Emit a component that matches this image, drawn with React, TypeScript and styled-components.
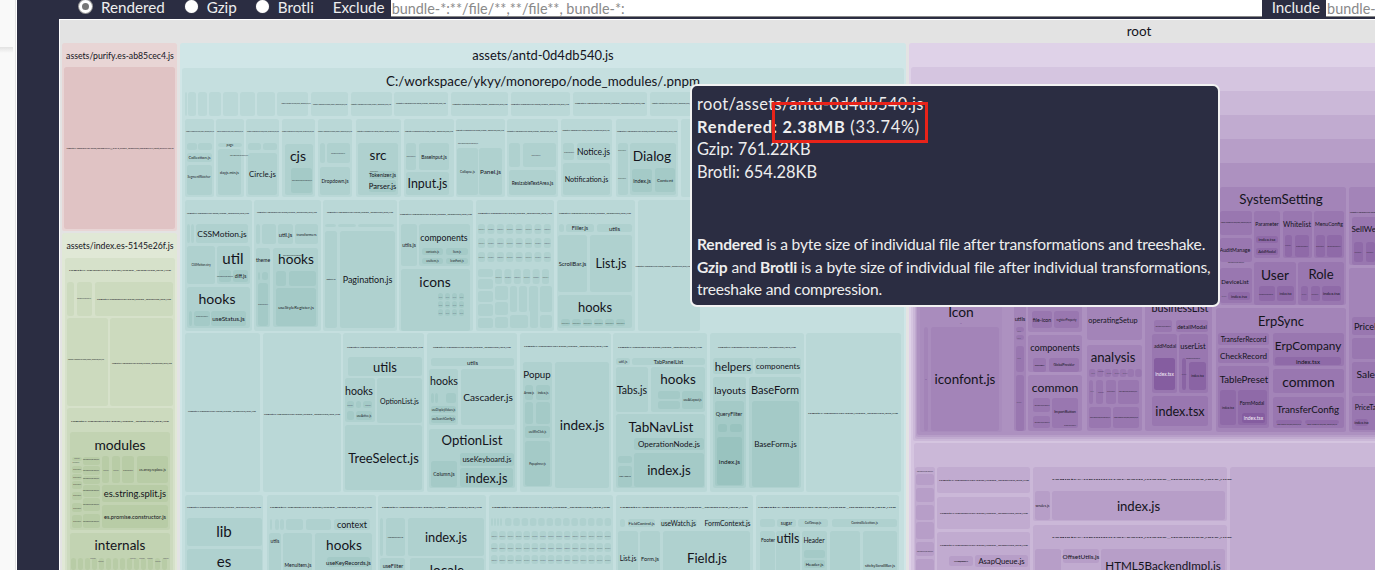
import styled, { createGlobalStyle } from "styled-components";

const FONT = `Lato, "Open Sans", sans-serif`;
const LABEL_SCALE = 1.08;

const GlobalStyle = createGlobalStyle`
  html, body {
    margin: 0;
    height: 100%;
    overflow: hidden;
    background: #2b2d42;
    font-family: ${FONT};
  }
`;

const Page = styled.div`
  position: relative;
  display: flex;
  width: 1375px;
  height: 570px;
  overflow: hidden;
`;

const Sidebar = styled.div`
  flex: 0 0 15px;
  background: #f9f9f9;
  border-right: 1px solid #e2e2e2;
  box-shadow: 1px 0 0 #fff;
  margin-right: 1px;
`;

const SideRule = styled.div`
  width: 13px;
  height: 6px;
  margin-top: 47px;
  background: linear-gradient(#e2e2e2, #f9f9f9);
`;

const Main = styled.main`
  flex: 1;
  min-width: 0;
  display: flex;
  flex-direction: column;
  background: #2b2d42;
`;

const Toolbar = styled.div`
  height: 19px;
  padding-left: 62px;
  display: flex;
  align-items: flex-start;
  color: #eee;
  font-size: 15.2px;
  line-height: 15px;
  white-space: nowrap;
`;

const Radio = styled.input.attrs({ type: "radio" })<{ $gap: number }>`
  appearance: none;
  flex: none;
  width: 13px;
  height: 13px;
  margin: 0 9px 0 ${(p) => p.$gap}px;
  border-radius: 50%;
  background: #fff;
  box-shadow: 0 0 1px #aaa;
  &:checked {
    background: #777;
    border: 3px solid #fff;
    box-sizing: border-box;
    box-shadow: 0 0 0 1px #999;
  }
`;

const Caption = styled.label<{ $gap?: number }>`
  margin-left: ${(p) => p.$gap ?? 0}px;
`;

const Filter = styled.input<{ $width: number }>`
  flex: none;
  box-sizing: border-box;
  width: ${(p) => p.$width}px;
  height: 17px;
  margin: 0 0 0 6px;
  padding: 0 1px;
  border: 0;
  border-bottom: 1px solid #888;
  border-radius: 0;
  background: #fff;
  font: 14.4px/15px ${FONT};
  &::placeholder {
    color: #8a8a8a;
  }
`;

const Chart = styled.div`
  margin-left: 42px;
  padding: 1px 0 0 1px;
  background: #fff;
  flex: 1;
  min-height: 0;
`;

const Map = styled.svg`
  display: block;
  background: #e3e3e3;
`;

const Cell = styled.rect`
  rx: 2.5px;
`;

const Label = styled.text<{ $light?: boolean }>`
  font-family: ${FONT};
  fill: ${(p) => (p.$light ? "#f4eef8" : "#14141c")};
  text-anchor: middle;
  dominant-baseline: central;
`;

const Tooltip = styled.div`
  position: absolute;
  left: 690px;
  top: 84px;
  box-sizing: border-box;
  width: 530px;
  height: 223px;
  padding: 7px 3px 0 5px;
  background: #2b2d42;
  border: 2px solid #f2f2f2;
  border-radius: 7px;
  color: #eee;
  font-size: 16.4px;
  line-height: 22.7px;
`;

const Lead = styled.div<{ $track?: number }>`
  white-space: nowrap;
  letter-spacing: ${(p) => p.$track ?? 0}px;
`;

const Note = styled.div`
  margin-top: 49px;
  font-size: 15.6px;
  letter-spacing: -0.16px;
  white-space: nowrap;
`;

const Highlight = styled.div`
  position: absolute;
  left: 772px;
  top: 102px;
  box-sizing: border-box;
  width: 156px;
  height: 41px;
  border: 3px solid #e8231a;
`;

// [x1, y1, x2, y2, depth, label?, size?, cx?, cy?]
type Box = [number, number, number, number, number, string?, number?, number?, number?];
// [cx, cy, width]
type Dash = [number, number, number];
type Palette = { base: number[]; step: number[]; boxes: Box[] };

const grid = (x: number, y: number, cols: number, rows: number, w: number, h: number, gx: number, gy: number, depth: number): Box[] => {
  const out: Box[] = [];
  for (let r = 0; r < rows; r++)
    for (let c = 0; c < cols; c++)
      out.push([x + c * (w + gx), y + r * (h + gy), x + c * (w + gx) + w, y + r * (h + gy) + h, depth]);
  return out;
};

const gridDashes = (x: number, y: number, cols: number, rows: number, w: number, h: number, gx: number, gy: number): Dash[] => {
  const out: Dash[] = [];
  for (let r = 0; r < rows; r++)
    for (let c = 0; c < cols; c++)
      out.push([x + c * (w + gx) + w / 2, y + r * (h + gy) + h / 2, w - 1]);
  return out;
};

const teal: Palette = {
  base: [208, 230, 231],
  step: [-11, -7, -8],
  boxes: [
    [180, 43, 906, 600, 0, "assets/antd-0d4db540.js", 12, 543, 55],
    [182, 68, 904, 600, 1, "C:/workspace/ykyy/monorepo/node_modules/.pnpm", 12.4, 543, 81],
    // first strip
    [185, 92, 187, 116, 2], [188, 92, 196, 116, 2], [198, 92, 207, 116, 2], [209, 92, 221, 116, 2],
    [223, 92, 238, 116, 2], [240, 92, 255, 116, 2], [257, 92, 275, 116, 2], [277, 92, 308, 116, 2],
    [311, 92, 348, 116, 2], [351, 92, 392, 116, 2], [394, 92, 448, 116, 2], [451, 92, 508, 116, 2],
    [511, 92, 570, 116, 2], [573, 92, 647, 116, 2], [650, 92, 693, 116, 2],
    // second strip
    [185, 119, 214, 197, 2], [187, 143, 197, 150, 3], [198, 143, 212, 150, 3], [187, 153, 212, 162, 3, "Collection.js", 3.8],
    [187, 165, 212, 195, 3, "SegmentWatcher", 2.8, 199, 177],
    [216, 119, 244, 197, 2], [218, 143, 242, 147, 3, "page", 3], [218, 149, 241, 195, 3, "dayjs.min.js", 3.5],
    [246, 119, 279, 197, 2], [248, 143, 261, 150, 3], [263, 143, 277, 150, 3], [248, 153, 277, 195, 3, "Circle.js", 7.3],
    [282, 119, 315, 197, 2], [285, 144, 313, 195, 3, "cjs", 13, 298, 155], [291, 168, 312, 193, 4],
    [318, 119, 352, 197, 2], [320, 143, 325, 163, 3], [327, 143, 350, 163, 3], [320, 167, 350, 195, 3, "Dropdown.js", 4.5],
    [356, 119, 401, 197, 2], [358, 143, 398, 195, 3, "src", 12.5, 378, 155], [369, 171, 396, 179, 4, "Tokenizer.js", 5], [369, 180, 396, 192, 4, "Parser.js", 7],
    [404, 119, 454, 197, 2], [406, 143, 416, 170, 3], [419, 143, 449, 170, 3, "BaseInput.js", 4.5], [406, 172, 449, 195, 3, "Input.js", 11.5],
    [456, 119, 505, 197, 2], [457, 148, 478, 195, 3, "Collapse.js", 3], [479, 148, 502, 195, 3, "Panel.js", 5.9],
    [507, 119, 558, 197, 2], [509, 143, 520, 167, 3], [523, 143, 556, 167, 3], [509, 170, 556, 195, 3, "ResizableTextArea.js", 4.4],
    [561, 119, 612, 197, 2], [563, 143, 574, 160, 3], [577, 143, 610, 160, 3, "Notice.js", 8], [563, 163, 610, 195, 3, "Notification.js", 6.6],
    [616, 119, 678, 197, 2], [618, 143, 628, 195, 3], [630, 143, 676, 195, 3, "Dialog", 12.7, 652, 155], [632, 169, 652, 192, 4, "index.js", 5], [655, 168, 675, 192, 4, "Content", 4.2],
    [681, 119, 700, 197, 2],
    // third strip
    [185, 200, 252, 331, 2], [187, 224, 190, 243, 3], [191, 224, 194, 243, 3], [196, 224, 248, 243, 3, "CSSMotion.js", 7.8],
    [187, 246, 215, 284, 3, "CSSMotion.stry", 2.6], [217, 246, 250, 284, 3, "util", 14, 233, 258], [219, 270, 231, 282, 4], [233, 270, 248, 282, 4, "diff.js", 4.6],
    [187, 287, 250, 328, 3, "hooks", 13, 217, 298], [189, 311, 192, 326, 4], [194, 311, 210, 326, 4], [211, 311, 246, 326, 4, "useStatus.js", 5.9],
    [254, 200, 321, 331, 2], [256, 224, 260, 244, 3], [262, 224, 276, 244, 3], [278, 224, 293, 244, 3, "util.js", 5.4], [295, 224, 318, 244, 3, "transformers", 3.3],
    [256, 248, 270, 327, 3, "theme", 4.7, 263, 260], [258, 272, 260, 280, 4], [262, 272, 268, 280, 4], [258, 283, 268, 326, 4],
    [273, 248, 318, 327, 3, "hooks", 12.6, 296, 259], [276, 271, 286, 286, 4], [289, 271, 316, 286, 4], [276, 288, 316, 326, 4, "useStyleRegister.js", 4.1],
    [323, 200, 397, 331, 2], [325, 224, 336, 227, 3], [338, 224, 356, 227, 3], [358, 224, 394, 227, 3], [325, 231, 337, 328, 3, "optany.js", 2.2], [340, 231, 395, 328, 3, "Pagination.js", 8.3],
    [399, 200, 473, 331, 2], [401, 224, 417, 266, 3, "utils.js", 4.6], [419, 224, 470, 266, 3, "components", 8.1, 444, 237], [422, 248, 443, 255, 4, "contexts.js", 2.6], [446, 248, 468, 255, 4, "Item.js", 2.6], [422, 258, 443, 264, 4, "useItem.js", 2.6], [446, 258, 468, 264, 4, "IconFont.js", 2.6],
    [401, 269, 470, 331, 3, "icons", 12.8, 435, 281],
    ...grid(438, 293, 4, 3, 5, 7, 2, 1, 4),
    [476, 200, 554, 331, 2],
    ...grid(478, 224, 8, 3, 7, 10, 2.4, 4, 3),
    ...grid(495, 269, 6, 1, 7, 15, 2.4, 0, 3),
    [478, 269, 493, 277, 3], [478, 279, 493, 289, 3], [478, 291, 493, 302, 3], [478, 304, 493, 316, 3], [478, 318, 493, 328, 3],
    [495, 286, 508, 300, 3], [495, 302, 508, 315, 3], [495, 317, 508, 328, 3],
    [510, 286, 517, 312, 3], [519, 286, 527, 312, 3], [529, 286, 538, 312, 3], [540, 286, 552, 312, 3],
    [510, 315, 528, 328, 3], [530, 305, 538, 328, 3], [540, 315, 552, 328, 3],
    [557, 200, 635, 331, 2], [559, 224, 564, 232, 3], [566, 224, 594, 232, 3, "Filler.js", 5], [597, 224, 632, 232, 3, "utils", 5.6],
    [558, 235, 587, 292, 3, "ScrollBar.js", 5.4], [590, 235, 632, 292, 3, "List.js", 11.7],
    [558, 295, 632, 328, 3, "hooks", 12, 595, 307],
    ...grid(561, 319, 6, 1, 9, 7, 2, 0, 4),
    [638, 200, 700, 331, 2],
    // fourth strip
    [185, 333, 260, 492, 2], [263, 333, 341, 492, 2],
    [343, 333, 424, 492, 2], [348, 357, 422, 376, 3, "utils", 12], [345, 378, 375, 422, 3, "hooks", 9.8, 359, 391], [377, 378, 422, 423, 3, "OptionList.js", 6.5],
    [347, 401, 354, 408, 4], [356, 401, 361, 408, 4], [363, 401, 372, 408, 4], [347, 411, 354, 420, 4], [356, 411, 372, 420, 4, "useActive.js", 2.6],
    [345, 425, 422, 490, 3, "TreeSelect.js", 12],
    [427, 333, 517, 492, 2], [431, 358, 514, 366, 3, "utils", 5.5], [429, 369, 458, 425, 3, "hooks", 9.8, 444, 381],
    [431, 393, 434, 403, 4], [435, 393, 438, 403, 4], [446, 393, 456, 403, 4], [431, 406, 456, 413, 4, "useDisplayValues.js", 2.6], [431, 415, 456, 423, 4, "useSearchConfig.js", 2.6],
    [461, 369, 515, 425, 3, "Cascader.js", 9.4], [429, 429, 515, 488, 3, "OptionList", 12.2, 472, 440],
    [460, 453, 514, 466, 4, "useKeyboard.js", 6.9], [431, 461, 457, 487, 4, "Column.js", 4.6], [460, 468, 513, 487, 4, "index.js", 11.8],
    [520, 333, 611, 492, 2], [523, 362, 552, 487, 3, "Popup", 9, 537, 374], [525, 385, 533, 400, 4, "Arrow.js", 2.6], [536, 385, 550, 400, 4, "index.js", 3],
    [525, 402, 533, 424, 4], [536, 402, 550, 424, 4], [525, 426, 550, 438, 4, "useWinClick.js", 2.6], [525, 441, 550, 486, 4, "PopupInner.js", 2.6], [555, 362, 609, 488, 3, "index.js", 12.6],
    [613, 333, 707, 492, 2], [616, 358, 630, 365, 3, "util.js", 3.4], [632, 358, 705, 365, 3, "TabPanelList", 5], [616, 367, 648, 412, 3, "Tabs.js", 9.8],
    [651, 367, 705, 412, 3, "hooks", 12.5, 678, 379], [682, 391, 703, 409, 4, "useAtLayout.js", 2.6], [658, 391, 680, 399, 4], [658, 401, 680, 409, 4],
    [616, 414, 705, 488, 3, "TabNavList", 12.5, 661, 427], [634, 438, 704, 450, 4, "OperationNode.js", 7.4], [634, 453, 704, 487, 4, "index.js", 12.3],
    [618, 456, 632, 463, 4], [618, 466, 632, 487, 4, "TabNode.js", 2.2],
    [710, 333, 804, 492, 2], [713, 358, 753, 374, 3, "helpers", 10.5], [755, 358, 801, 374, 3, "components", 7.5], [713, 377, 746, 488, 3, "layouts", 9.3, 730, 390],
    [715, 401, 744, 486, 4, "QueryFilter", 4.9, 729, 414], [718, 424, 727, 432, 5], [730, 424, 742, 432, 5], [717, 437, 742, 485, 5, "index.js", 6],
    [749, 377, 801, 488, 3, "BaseForm", 10.2, 775, 389], [752, 401, 799, 487, 4, "BaseForm.js", 7.5],
    [806, 333, 901, 492, 2],
    // fifth strip
    [185, 495, 263, 600, 2], [187, 518, 262, 546, 3, "lib", 14, 224, 531], [187, 549, 262, 600, 3, "es", 14, 224, 561],
    [267, 495, 376, 600, 2], [270, 519, 272, 530, 3], [275, 519, 279, 530, 3], [280, 519, 284, 530, 3], [286, 519, 303, 530, 3], [306, 519, 331, 530, 3], [334, 519, 370, 530, 3, "context", 8.4],
    [269, 533, 281, 600, 3, "utils", 4.4, 275, 541], [283, 533, 312, 600, 3, "Menultem.js", 4.6, 298, 565], [315, 533, 372, 600, 3, "hooks", 12.6, 344, 545], [327, 557, 370, 567, 4, "useKeyRecords.js", 5.5],
    [378, 495, 486, 600, 2], [380, 518, 383, 556, 3], [386, 518, 405, 556, 3, "useRowKey.js", 2.4], [408, 518, 484, 556, 3, "index.js", 11.9], [380, 558, 405, 600, 3, "useFilter", 5, 393, 566], [410, 558, 484, 600, 3, "locale", 12.6, 447, 570],
    [489, 495, 613, 600, 2],
    ...grid(491, 518, 18, 1, 2, 8, 1, 0, 3).slice(0, 4), ...grid(505, 518, 13, 1, 6.5, 8, 1.8, 0, 3),
    ...grid(491, 531, 15, 3, 6.6, 9, 1.5, 3, 3),
    [616, 495, 753, 600, 2], [620, 519, 625, 527, 3], [628, 519, 655, 527, 3, "FieldControl.js", 3.8], [660, 519, 697, 527, 3, "useWatch.js", 6.2], [705, 519, 750, 527, 3, "FormContext.js", 6.4],
    [618, 531, 638, 600, 3, "List.js", 6.3, 628, 558], [640, 531, 660, 600, 3, "Form.js", 5.2, 650, 558], [663, 531, 750, 600, 3, "Field.js", 12.2, 707, 558],
    [756, 495, 899, 600, 2], [760, 519, 775, 527, 3], [777, 519, 796, 527, 3, "sugar", 4.4], [798, 519, 828, 527, 3, "ColGroup.js", 3], [832, 519, 897, 527, 3, "ControlSelection.js", 3],
    [760, 531, 775, 600, 3, "Footer", 4.5, 768, 540], [776, 531, 800, 600, 3, "utils", 11.5, 788, 538], [802, 531, 827, 600, 3, "Header", 6.1, 814, 540], [830, 531, 860, 600, 3], [863, 531, 897, 600, 3, "stickyScrollBar.js", 3.8],
    [804, 550, 825, 558, 4], [804, 560, 825, 568, 4, "Header.js", 4],
  ],
};

const tealDashes: Dash[] = [
  [296, 103, 29], [330, 104, 34], [371, 104, 40], [421, 103, 50], [480, 104, 55], [540, 104, 58], [610, 103, 70], [672, 103, 40],
  [200, 131, 28], [230, 131, 26], [263, 131, 32], [298, 131, 32], [335, 131, 34], [378, 131, 42], [429, 131, 48], [480, 130, 48], [532, 131, 50], [586, 130, 47], [647, 131, 60],
  [218, 213, 62], [287, 212, 60], [360, 212, 66], [436, 214, 72], [515, 213, 74], [595, 213, 72], [663, 266, 55],
  [338, 153, 14], [411, 156, 9], [536, 155, 9], [569, 152, 10], [622, 150, 8], [622, 178, 8], [468, 143, 20],
  [302, 180, 20], [239, 155, 18], [293, 255, 20], [225, 276, 16], [202, 316, 12], [263, 304, 10],
  [374, 171, 8], [374, 185, 8], [350, 405, 6], [368, 405, 6],
  [222, 411, 68], [302, 414, 76], [385, 347, 76], [472, 347, 78], [566, 346, 84], [660, 347, 84], [757, 347, 78], [853, 413, 90],
  [224, 507, 74], [321, 507, 102], [432, 507, 100], [551, 507, 118], [684, 507, 128], [827, 507, 138],
  ...gridDashes(438, 293, 4, 3, 5, 7, 2, 1),
  ...gridDashes(478, 224, 8, 3, 7, 10, 2.4, 4),
  ...gridDashes(495, 269, 6, 1, 7, 15, 2.4, 0),
  ...gridDashes(491, 531, 15, 3, 6.6, 9, 1.5, 3),
  ...gridDashes(561, 319, 6, 1, 9, 7, 2, 0),
];

const red: Palette = {
  base: [232, 213, 213],
  step: [-8, -18, -17],
  boxes: [
    [62, 43, 177, 231, 0, "assets/purify.es-ab85cec4.js", 8.05, 120, 55],
    [64, 67, 175, 229, 1],
  ],
};

const green: Palette = {
  base: [224, 232, 214],
  step: [-10, -7, -12],
  boxes: [
    [62, 233, 177, 600, 0, "assets/index.es-5145e26f.js", 8.05, 120, 245],
    [65, 258, 175, 600, 1],
    [67, 282, 74, 316, 2], [77, 282, 92, 316, 2], [95, 282, 173, 316, 2],
    [67, 318, 108, 406, 2], [110, 318, 173, 406, 2],
    [67, 408, 173, 600, 2],
    [70, 432, 170, 530, 3, "modules", 12.8, 120, 444],
    [72, 457, 82, 461, 4], [72, 466, 82, 473, 4], [72, 474, 82, 480, 4], [72, 481, 82, 489, 4], [72, 492, 82, 500, 4], [72, 503, 82, 512, 4], [72, 515, 82, 528, 4],
    [83, 457, 100, 465, 4], [83, 466, 100, 475, 4], [83, 476, 100, 484, 4], [83, 485, 100, 497, 4], [83, 498, 100, 511, 4], [83, 514, 100, 528, 4],
    [102, 456, 109, 483, 4], [112, 456, 120, 483, 4], [122, 456, 134, 483, 4], [137, 456, 168, 483, 4, "es.array.replace.js", 3.2],
    [102, 485, 168, 502, 4, "es.string.split.js", 8.7], [102, 505, 168, 528, 4, "es.promise.constructor.js", 5.3],
    [70, 533, 170, 600, 3, "internals", 12.5, 120, 545],
    ...grid(71, 558, 14, 1, 5, 12, 2, 0, 4),
  ],
};

const greenDashes: Dash[] = [
  [120, 270, 102], [84, 298, 14], [134, 299, 74], [86, 359, 36], [142, 363, 60], [120, 421, 98],
  [77, 458, 6], [76, 462, 7], [91, 459, 16], [91, 470, 16], [91, 478, 16], [91, 490, 16], [91, 504, 16], [91, 521, 16],
  [77, 469, 8], [77, 477, 8], [77, 484, 8], [77, 495, 8], [77, 508, 8], [77, 521, 8],
  [106, 470, 6], [116, 470, 6], [128, 470, 10],
  [93, 558, 6], [101, 561, 6], [133, 558, 6], [142, 558, 6], [150, 558, 6], [158, 561, 6], [166, 558, 6],
];

const purple: Palette = {
  base: [223, 210, 232],
  step: [-10, -13, -8],
  boxes: [
    [909, 43, 2300, 700, 0],
    [911, 67, 2298, 700, 1],
    [913, 91, 2296, 441, 2],
    [915, 115, 2294, 439, 3],
    [916, 139, 2292, 437, 4],
    [917, 163, 2290, 435, 5],
    // icon
    [920, 200, 1002, 432, 5.4, "Icon", 12.8, 961, 311],
    [924, 327, 928, 431, 6], [931, 327, 999, 431, 6, "iconfont.js", 12.4],
    // pages
    [1014, 200, 1026, 431, 6, "utils", 5.4, 1020, 318], [1016, 327, 1024, 332, 7], [1016, 335, 1024, 340, 7], [1016, 346, 1024, 372, 7], [1016, 375, 1024, 431, 7],
    [1028, 300, 1082, 332, 6], [1032, 311, 1052, 328, 7, "file-icon", 4.8], [1054, 311, 1079, 328, 7, "registerProperty", 2.6],
    [1028, 335, 1082, 372, 6, "components", 8.5, 1055, 347], [1033, 358, 1046, 372, 7, "manager", 2.4], [1049, 358, 1079, 372, 7, "GlobalProvider", 3],
    [1028, 375, 1082, 431, 6, "common", 11.3, 1055, 387], [1033, 398, 1050, 412, 7], [1033, 416, 1050, 428, 7], [1052, 398, 1078, 428, 7, "ImportButton", 3.4, 1065, 411],
    [1087, 300, 1142, 340, 6, "operatingSetup", 6.8, 1113, 320],
    [1087, 345, 1142, 431, 6, "analysis", 12.2, 1113, 357],
    ...grid(1089, 369, 7, 1, 6.5, 8, 1.2, 0, 7),
    [1089, 380, 1093, 404, 7], [1096, 380, 1103, 404, 7], [1106, 380, 1116, 404, 7], [1118, 380, 1139, 404, 7],
    [1089, 407, 1111, 428, 7], [1113, 407, 1139, 428, 7],
    [1145, 296, 1212, 431, 6, "businessList", 10, 1180, 307],
    [1154, 320, 1172, 332, 7], [1176, 320, 1208, 332, 7, "detailModal", 5.3],
    [1152, 334, 1177, 393, 7, "addModal", 4.7, 1165, 346], [1154, 358, 1175, 390, 9, "index.tsx", 4.4],
    [1179, 334, 1208, 393, 7, "userList", 6.9, 1193, 346], [1182, 358, 1186, 390, 8.5], [1189, 362, 1206, 390, 8.5, "index.tsx", 3],
    [1152, 396, 1208, 426, 7, "index.tsx", 11.7],
    [1216, 308, 1346, 432, 6, "ErpSync", 12, 1281, 321],
    [1218, 333, 1269, 345, 7, "TransferRecord", 6.4], [1218, 348, 1269, 363, 7, "CheckRecord", 7.5],
    [1218, 366, 1269, 428, 7, "TablePreset", 8.9, 1244, 379], [1220, 390, 1236, 425, 8, "index.tsx", 2.8], [1238, 390, 1267, 425, 8, "FormModal", 4.5, 1252, 403], [1242, 413, 1265, 423, 9, "index.tsx", 4.6],
    [1273, 333, 1344, 366, 7, "ErpCompany", 10.9, 1308, 345], [1275, 357, 1341, 365, 8, "index.tsx", 5.7],
    [1273, 369, 1344, 393, 7, "common", 12.8],
    [1273, 397, 1344, 428, 7, "TransferConfig", 9, 1308, 409], [1276, 420, 1302, 424, 8], [1305, 420, 1339, 424, 8],
    [1220, 187, 1346, 305, 6, "SystemSetting", 12.4, 1281, 199],
    [1220, 211, 1252, 235, 7], [1220, 238, 1252, 262, 7, "AuditManage", 4.8, 1235, 250], [1220, 268, 1252, 303, 7, "DeviceList", 5.6, 1235, 281], [1228, 292, 1250, 300, 8, "index.tsx", 3.8],
    [1254, 211, 1280, 258, 7, "Parameter", 4.8, 1267, 224], [1256, 236, 1278, 243, 8, "index.tsx", 4], [1256, 248, 1278, 255, 8, "AddModal", 3.6],
    [1283, 211, 1312, 258, 7, "Whitelist", 6.5, 1297, 224], [1285, 235, 1292, 257, 8], [1295, 235, 1309, 257, 8],
    [1314, 211, 1344, 258, 7, "MenuConfig", 4.8, 1329, 224], [1316, 235, 1325, 257, 8], [1327, 235, 1342, 257, 8],
    [1254, 262, 1296, 305, 7, "User", 12.7, 1275, 274], [1259, 286, 1275, 301, 8], [1277, 286, 1294, 301, 8, "index.tsx", 2.8],
    [1298, 262, 1344, 305, 7, "Role", 12.1, 1321, 274], [1301, 286, 1308, 301, 8], [1311, 286, 1320, 301, 8], [1322, 286, 1341, 301, 8, "index.tsx", 4],
    [1349, 187, 1500, 265, 6], [1352, 217, 1500, 265, 7, "SellWeb", 7.5, 1366, 229], [1354, 242, 1363, 262, 8], [1366, 242, 1375, 262, 8],
    [1349, 268, 1500, 432, 6], [1352, 317, 1500, 335, 7, "PriceList", 8.5, 1371, 326], [1352, 338, 1500, 359, 7],
    [1352, 362, 1500, 393, 7, "SaleOrder", 9.5, 1379, 374], [1352, 396, 1500, 430, 7, "PriceTable", 6.5, 1370, 407], [1355, 419, 1368, 426, 8, "index.tsx", 3.4],
    // second purple group
    [914, 443, 2296, 700, 2],
    [915, 467, 935, 700, 3], [916, 474, 934, 485, 4], [916, 488, 934, 502, 4], [916, 505, 934, 520, 4], [916, 522, 934, 539, 4], [916, 542, 934, 556, 4], [916, 559, 934, 700, 4],
    [937, 467, 1030, 493, 3], [937, 497, 1030, 529, 3], [937, 532, 1030, 700, 3],
    [949, 556, 973, 566, 4, "asapQueue.js", 2.2], [975, 555, 1028, 567, 4, "AsapQueue.js", 7.1],
    [1033, 467, 1227, 521, 3], [1035, 491, 1050, 520, 4, "wrules.js", 3.4], [1052, 491, 1225, 520, 4, "index.js", 12.2],
    [1033, 525, 1227, 700, 3], [1035, 549, 1061, 700, 4], [1063, 549, 1099, 563, 4, "OffsetUtils.js", 6], [1101, 549, 1225, 700, 4, "HTML5BackendImpl.js", 10.8, 1163, 565],
    [1230, 467, 2290, 700, 3],
  ],
};

const purpleDashes: Dash[] = [
  [926, 379, 3], [961, 323, 3], [1019, 331, 4], [1019, 338, 4], [1019, 358, 4], [1019, 402, 5],
  [1042, 405, 15], [1042, 422, 15], [1070, 425, 12],
  [1093, 373, 4], [1101, 371, 6], [1109, 373, 5], [1117, 373, 5], [1125, 373, 5],
  [1092, 391, 4], [1101, 392, 6], [1111, 391, 8], [1128, 391, 18], [1100, 417, 20], [1126, 417, 24],
  [1163, 326, 15], [1193, 358, 14], [1184, 374, 5], [1288, 245, 6], [1302, 246, 12], [1320, 246, 8], [1334, 246, 13],
  [1266, 294, 14], [1304, 294, 5], [1315, 294, 7], [1358, 252, 7], [1370, 252, 7], [1375, 212, 50],
  [1224, 296, 5], [1236, 222, 30], [1236, 262, 16], [1289, 424, 24], [1322, 424, 30],
  [984, 480, 90], [984, 513, 88], [984, 545, 88], [1142, 479, 180], [1142, 537, 180], [925, 551, 16],
  [925, 471, 16], [962, 561, 8],
];

const rgb = (p: Palette, depth: number) =>
  `rgb(${p.base.map((v, i) => v + p.step[i] * depth).join(",")})`;

// labels on the deepest purple tiles are drawn light
const isLight = (b: Box) => b[4] >= 9 && (b[6] ?? 0) > 4;

const Tiles = ({ palette }: { palette: Palette }) => (
  <>
    {palette.boxes.map((b, i) => (
      <Cell key={i} x={b[0]} y={b[1]} width={b[2] - b[0]} height={b[3] - b[1]} fill={rgb(palette, b[4])} />
    ))}
    {palette.boxes.map((b, i) =>
      b[5] ? (
        <Label key={i} x={b[7] ?? (b[0] + b[2]) / 2} y={b[8] ?? (b[1] + b[3]) / 2} fontSize={(b[6] ?? 8) * LABEL_SCALE} $light={isLight(b)}>
          {b[5]}
        </Label>
      ) : null
    )}
  </>
);

const Dashes = ({ items }: { items: Dash[] }) => (
  <>
    {items.map((d, i) => (
      <Label key={i} x={d[0]} y={d[1]} fontSize={2} textLength={d[2]} lengthAdjust="spacingAndGlyphs">
        registry.npmmirror.com/node_modules/src/lib
      </Label>
    ))}
  </>
);

export default function App() {
  return (
    <Page>
      <GlobalStyle />
      <Sidebar>
        <SideRule />
      </Sidebar>
      <Main>
        <Toolbar>
          <Radio $gap={0} name="size" defaultChecked />
          <Caption>Rendered</Caption>
          <Radio $gap={20} name="size" />
          <Caption>Gzip</Caption>
          <Radio $gap={19} name="size" />
          <Caption>Brotli</Caption>
          <Caption $gap={19}>Exclude</Caption>
          <Filter $width={871} placeholder="bundle-*:**/file/**,**/file**, bundle-*:" />
          <Caption $gap={10}>Include</Caption>
          <Filter $width={80} placeholder="bundle-*:" />
        </Toolbar>
        <Chart>
          <Map width={1315} height={550} viewBox="60 20 1315 550">
            <Label x={1139} y={31} fontSize={13.5}>root</Label>
            <Tiles palette={red} />
            <Tiles palette={green} />
            <Tiles palette={teal} />
            <Tiles palette={purple} />
            <Label x={120} y={148} fontSize={2} textLength={107} lengthAdjust="spacingAndGlyphs">
              registry.npmmirror.com/dompurify@3.0.5/node_modules/dompurify/dist/purify.es.js
            </Label>
            <Dashes items={tealDashes} />
            <Dashes items={greenDashes} />
            <Dashes items={purpleDashes} />
          </Map>
        </Chart>
      </Main>
      <Tooltip>
        <Lead $track={0.4}>root/assets/antd-0d4db540.js</Lead>
        <Lead $track={0.72}><b>Rendered: 2.38MB</b> (33.74%)</Lead>
        <Lead>Gzip: 761.22KB</Lead>
        <Lead>Brotli: 654.28KB</Lead>
        <Note>
          <b>Rendered</b> is a byte size of individual file after transformations and treeshake.
          <br />
          <b>Gzip</b> and <b>Brotli</b> is a byte size of individual file after individual transformations,
          <br />
          treeshake and compression.
        </Note>
      </Tooltip>
      <Highlight />
    </Page>
  );
}
